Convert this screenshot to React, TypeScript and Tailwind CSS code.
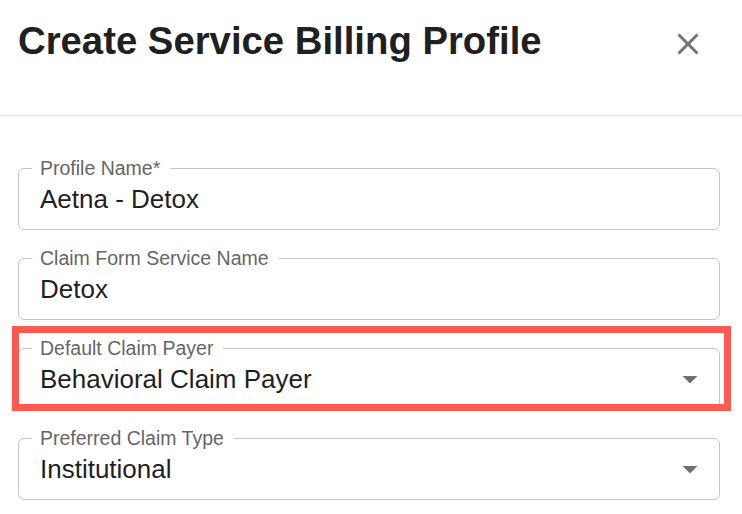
import React from "react";

function Field({ label, value, select }: { label: string; value: string; select?: boolean }) {
  return (
    <fieldset className="m-0 min-w-0 rounded-[6px] border border-[#c4c4c4] p-0">
      <legend className="ml-[13px] pl-[8px] pr-[10px] text-[19.5px] leading-[20px] text-[#666666]">{label}</legend>
      <div className="flex h-[30px] items-center justify-between pl-[21px] pr-[11px] mt-[6px] mb-[15px]">
        <span className="text-[26px] leading-[30px] text-[#1f1f1f]">{value}</span>
        {select && (
          <svg width="36" height="36" viewBox="0 0 24 24" className="shrink-0" aria-hidden="true">
            <path d="M7 10l5 5 5-5z" fill="#707070" />
          </svg>
        )}
      </div>
    </fieldset>
  );
}

export default function App() {
  return (
    <div className="h-[514px] w-[742px] overflow-hidden bg-white font-['Liberation_Sans',Arial,sans-serif]">
      <header className="flex h-[115px] items-start justify-between pl-[18px] pr-[36px] pt-[22px]">
        <h1 className="text-[38.3px] font-bold leading-[38px] text-[#202020]">Create Service Billing Profile</h1>
        <button className="mt-[4px] flex h-[36px] w-[36px] items-center justify-center" aria-label="Close">
          <svg width="36" height="36" viewBox="0 0 24 24" aria-hidden="true">
            <path
              d="M19 6.41 17.59 5 12 10.59 6.41 5 5 6.41 10.59 12 5 17.59 6.41 19 12 13.41 17.59 19 19 17.59 13.41 12z"
              fill="#737373"
            />
          </svg>
        </button>
      </header>
      <div className="h-px w-full bg-[#e3e3e3]" />
      <div className="flex w-[720px] flex-col gap-[18px] pl-[18px] pt-[42px]">
        <Field label="Profile Name*" value="Aetna - Detox" />
        <Field label="Claim Form Service Name" value="Detox" />
        <div className="relative">
          <Field label="Default Claim Payer" value="Behavioral Claim Payer" select />
          <div className="pointer-events-none absolute left-[-6px] top-[-12px] h-[85px] w-[719px] border-[7px] border-[#ff5a4f]" />
        </div>
        <Field label="Preferred Claim Type" value="Institutional" select />
      </div>
    </div>
  );
}
